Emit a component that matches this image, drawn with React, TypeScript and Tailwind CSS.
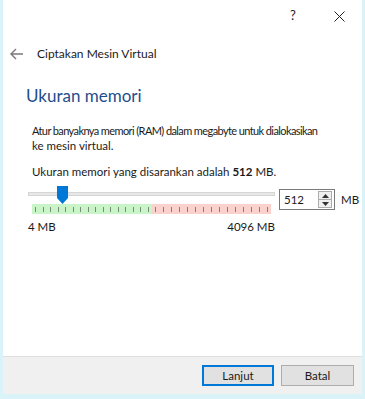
import React from "react";

const ticks = Array.from({ length: 31 }, (_, i) => i);

const App: React.FC = () => {
  return (
    <div
      className="w-[365px] h-[399px] bg-[#d9f3f8] px-[3px] pb-[5px] flex flex-col text-[#1a1a1a]"
      style={{ fontFamily: 'Lato, "Noto Sans", sans-serif' }}
    >
      <div className="flex-1 bg-white flex flex-col">
        {/* title bar */}
        <div className="h-[32px] flex items-center justify-end">
          <span className="w-[46px] text-center text-[13px] text-[#222]">?</span>
          <span className="w-[46px] flex justify-center">
            <svg width="11" height="11" viewBox="0 0 11 11">
              <path d="M0.5 0.5 L10.5 10.5 M10.5 0.5 L0.5 10.5" stroke="#222" strokeWidth="1" />
            </svg>
          </span>
        </div>

        {/* back + title */}
        <div className="h-[24px] mt-[10px] flex items-center">
          <svg width="14" height="12" viewBox="0 0 14 12" className="ml-[7px]">
            <path d="M6 1 L1 6 L6 11 M1 6 H13" stroke="#7a7a7a" strokeWidth="1.4" fill="none" />
          </svg>
          <span className="ml-[13px] text-[12px]">Ciptakan Mesin Virtual</span>
        </div>

        {/* heading */}
        <div className="mt-[18px] pl-[23px] text-[17px] text-[#1f4e8c] leading-[24px]">Ukuran memori</div>

        {/* content */}
        <div className="pl-[29px] pr-[5px] mt-[15px] text-[11.5px] leading-[15px] whitespace-nowrap">
          <p>
            <span className="text-[11px] tracking-[-0.6px]">Atur banyaknya memori (RAM) dalam megabyte untuk dialokasikan</span>
            <br />
            ke mesin virtual.
          </p>
          <p className="mt-[11px]">
            Ukuran memori yang disarankan adalah <b>512</b> MB.
          </p>

          <div className="flex items-start mt-[7px] -ml-[4px]">
            <div className="w-[247px] shrink-0 flex flex-col">
              <div className="relative h-[18px]">
                <div className="absolute left-0 right-0 top-[6px] h-[4px] bg-[#e7e7e7] border border-[#d6d6d6]" />
                <svg width="11" height="18" viewBox="0 0 11 18" className="absolute left-[29px] top-0">
                  <path d="M0 0 H11 V12 L5.5 18 L0 12 Z" fill="#0078d7" />
                </svg>
              </div>
              <div className="flex h-[10px] ml-[4px] mr-[4px]">
                <div className="w-[120px] bg-[#c8f4c8] flex justify-between px-[3px] items-center">
                  {ticks.slice(0, 16).map((t) => (
                    <span key={t} className="w-px h-[5px] bg-[#7a8a7a]" />
                  ))}
                </div>
                <div className="flex-1 bg-[#fbd1cd] flex justify-between px-[3px] items-center">
                  {ticks.slice(0, 15).map((t) => (
                    <span key={t} className="w-px h-[5px] bg-[#8a7a7a]" />
                  ))}
                </div>
              </div>
              <div className="flex justify-between mt-[5px]">
                <span>4 MB</span>
                <span>4096 MB</span>
              </div>
            </div>

            <div className="ml-[4px] mt-[3px] w-[56px] shrink-0 h-[21px] border border-[#7a7a7a] flex items-center bg-white">
              <span className="pl-[4px] flex-1">512</span>
              <div className="w-[14px] h-[17px] mr-[2px] border border-[#acacac] bg-[#f0f0f0] flex flex-col">
                <div className="flex-1 flex items-center justify-center border-b border-[#acacac]">
                  <svg width="7" height="4" viewBox="0 0 7 4"><path d="M0 4 L3.5 0 L7 4 Z" fill="#333" /></svg>
                </div>
                <div className="flex-1 flex items-center justify-center">
                  <svg width="7" height="4" viewBox="0 0 7 4"><path d="M0 0 L3.5 4 L7 0 Z" fill="#333" /></svg>
                </div>
              </div>
            </div>
            <span className="ml-[6px] mt-[6px]">MB</span>
          </div>
        </div>

        <div className="flex-1" />

        {/* footer */}
        <div className="h-[38px] bg-[#f0f0f0] border-t border-[#dfdfdf] flex items-center justify-end pr-[8px] gap-[7px] text-[11.5px]">
          <button className="w-[72px] h-[21px] bg-[#e1e1e1] border-2 border-[#0078d7]">Lanjut</button>
          <button className="w-[73px] h-[21px] bg-[#e1e1e1] border border-[#adadad]">Batal</button>
        </div>
      </div>
    </div>
  );
};

export default App;
